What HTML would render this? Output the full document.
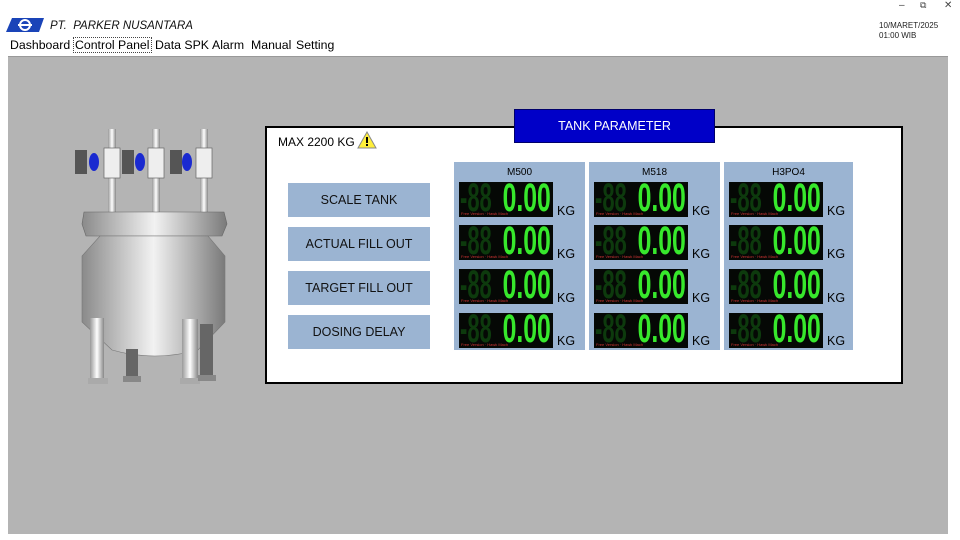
<!DOCTYPE html>
<html><head><meta charset="utf-8"><style>
*{margin:0;padding:0;box-sizing:border-box}
body{width:960px;height:540px;background:#fff;position:relative;overflow:hidden;font-family:"Liberation Sans",sans-serif}
.a{position:absolute}
.tab{position:absolute;top:38px;font-size:12.3px;color:#000}
.gray{left:8px;top:56px;width:940px;height:478px;background:#b4b4b4;border-top:1px solid #999}
.panel{left:265px;top:126px;width:638px;height:258px;background:#fff;border:2px solid #000}
.title{left:514px;top:109px;width:201px;height:34px;background:#0000c8;color:#fff;font-size:12.5px;text-align:center;line-height:32px;border:1px solid #00006a}
.btn{position:absolute;left:288px;width:142px;height:34px;background:#9bb4d2;font-size:12.5px;text-align:center;line-height:34px;color:#111}
.col{position:absolute;top:162px;width:131px;height:188px;background:#9bb4d2}
.col .h{position:absolute;top:5px;width:100%;text-align:center;font-size:10px}
.disp{position:absolute;left:5px;width:94px;height:35px;background:#050805;overflow:hidden}
.disp .d{position:absolute;left:1px;top:-6px;font-size:40px;font-weight:bold;color:#0d3a0d;transform:scaleX(0.55);transform-origin:left top;font-family:"Liberation Sans Narrow","Liberation Sans",sans-serif}
.disp .b{position:absolute;right:2px;top:-6px;font-size:40px;font-weight:bold;color:#37e82c;transform:scaleX(0.62);transform-origin:right top;font-family:"Liberation Sans Narrow","Liberation Sans",sans-serif}
.disp .f{position:absolute;left:2px;bottom:1px;font-size:4px;color:#c33}
.kg{position:absolute;left:103px;font-size:12.5px}
</style></head><body>
<svg class="a" style="left:6px;top:17px" width="40" height="16" viewBox="0 0 40 16"><path d="M6 1 H38 L33 15 H0 Z" fill="#1a44b8"/><circle cx="19" cy="8" r="5" fill="none" stroke="#fff" stroke-width="2"/><path d="M12 8 H26" stroke="#fff" stroke-width="2"/></svg>
<div class="a" style="left:50px;top:20px;font-size:11.5px;font-style:italic;color:#111">PT.&nbsp; PARKER NUSANTARA</div>
<div class="tab" style="left:10px">Dashboard</div>
<div class="tab" style="left:73px;top:37px;border:1px dotted #444;padding:0 1px">Control Panel</div>
<div class="tab" style="left:155px">Data SPK</div>
<div class="tab" style="left:212px">Alarm</div>
<div class="tab" style="left:251px">Manual</div>
<div class="tab" style="left:296px">Setting</div>
<div class="a" style="left:899px;top:0px;font-size:10px;color:#444">–</div>
<div class="a" style="left:920px;top:0px;font-size:9px;color:#444">⧉</div>
<div class="a" style="left:944px;top:0px;font-size:10px;color:#444">✕</div>
<div class="a" style="left:879px;top:21px;font-size:8px;color:#222;line-height:10px">10/MARET/2025<br>01:00 WIB</div>
<div class="a gray"></div>
<svg class="a" style="left:70px;top:124px" width="160" height="262" viewBox="0 0 160 262">
<defs><linearGradient id="g" x1="0" x2="1"><stop offset="0" stop-color="#8a8a8a"/><stop offset=".5" stop-color="#f2f2f2"/><stop offset="1" stop-color="#7a7a7a"/></linearGradient>
<linearGradient id="p" x1="0" x2="1"><stop offset="0" stop-color="#999"/><stop offset=".5" stop-color="#fff"/><stop offset="1" stop-color="#888"/></linearGradient></defs>
<rect x="38" y="5" width="8" height="88" fill="url(#p)"/><rect x="82" y="5" width="8" height="88" fill="url(#p)"/><rect x="130" y="5" width="8" height="88" fill="url(#p)"/>
<g fill="#eee" stroke="#666" stroke-width=".7"><rect x="34" y="24" width="16" height="30"/><rect x="78" y="24" width="16" height="30"/><rect x="126" y="24" width="16" height="30"/></g>
<g><rect x="5" y="26" width="12" height="24" fill="#555"/><ellipse cx="24" cy="38" rx="5" ry="9" fill="#1a2ad0"/><rect x="52" y="26" width="12" height="24" fill="#555"/><ellipse cx="70" cy="38" rx="5" ry="9" fill="#1a2ad0"/><rect x="100" y="26" width="12" height="24" fill="#555"/><ellipse cx="117" cy="38" rx="5" ry="9" fill="#1a2ad0"/></g>
<path d="M14 88 H154 L157 100 L152 112 H16 L12 100 Z" fill="url(#g)" stroke="#666" stroke-width=".6"/>
<path d="M30 112 H138 L155 132 V198 L128 226 Q85 238 42 226 L12 198 V132 Z" fill="url(#g)" stroke="#777" stroke-width=".6"/>
<rect x="20" y="194" width="14" height="60" fill="url(#p)"/><rect x="18" y="254" width="20" height="6" fill="#aaa"/>
<rect x="112" y="195" width="16" height="60" fill="url(#p)"/><rect x="110" y="254" width="20" height="6" fill="#aaa"/>
<rect x="56" y="225" width="12" height="28" fill="#666"/><rect x="53" y="252" width="18" height="6" fill="#888"/>
<rect x="130" y="200" width="13" height="52" fill="#666"/><rect x="128" y="251" width="18" height="6" fill="#888"/>
</svg>
<div class="a panel"></div>
<div class="a title">TANK PARAMETER</div>
<div class="a" style="left:278px;top:135px;font-size:12px">MAX 2200 KG</div>
<svg class="a" style="left:357px;top:131px" width="20" height="18" viewBox="0 0 20 18"><path d="M10 1 L19 17 H1 Z" fill="#ffef3a" stroke="#888" stroke-width="1"/><rect x="9" y="6" width="2" height="6" fill="#000"/><rect x="9" y="13" width="2" height="2" fill="#000"/></svg>
<div class="btn" style="top:183px">SCALE TANK</div>
<div class="btn" style="top:227px">ACTUAL FILL OUT</div>
<div class="btn" style="top:271px">TARGET FILL OUT</div>
<div class="btn" style="top:315px">DOSING DELAY</div>
<div class="col" style="left:454px"><div class="h">M500</div>
<div class="disp" style="top:20px"><span class="d">-88</span><span class="b">0.00</span><span class="f">Free Version · Hawk Mach</span></div><div class="kg" style="top:42px">KG</div>
<div class="disp" style="top:63px"><span class="d">-88</span><span class="b">0.00</span><span class="f">Free Version · Hawk Mach</span></div><div class="kg" style="top:85px">KG</div>
<div class="disp" style="top:107px"><span class="d">-88</span><span class="b">0.00</span><span class="f">Free Version · Hawk Mach</span></div><div class="kg" style="top:129px">KG</div>
<div class="disp" style="top:151px"><span class="d">-88</span><span class="b">0.00</span><span class="f">Free Version · Hawk Mach</span></div><div class="kg" style="top:172px">KG</div></div>
<div class="col" style="left:589px"><div class="h">M518</div>
<div class="disp" style="top:20px"><span class="d">-88</span><span class="b">0.00</span><span class="f">Free Version · Hawk Mach</span></div><div class="kg" style="top:42px">KG</div>
<div class="disp" style="top:63px"><span class="d">-88</span><span class="b">0.00</span><span class="f">Free Version · Hawk Mach</span></div><div class="kg" style="top:85px">KG</div>
<div class="disp" style="top:107px"><span class="d">-88</span><span class="b">0.00</span><span class="f">Free Version · Hawk Mach</span></div><div class="kg" style="top:129px">KG</div>
<div class="disp" style="top:151px"><span class="d">-88</span><span class="b">0.00</span><span class="f">Free Version · Hawk Mach</span></div><div class="kg" style="top:172px">KG</div></div>
<div class="col" style="left:724px;width:129px"><div class="h">H3PO4</div>
<div class="disp" style="top:20px"><span class="d">-88</span><span class="b">0.00</span><span class="f">Free Version · Hawk Mach</span></div><div class="kg" style="top:42px">KG</div>
<div class="disp" style="top:63px"><span class="d">-88</span><span class="b">0.00</span><span class="f">Free Version · Hawk Mach</span></div><div class="kg" style="top:85px">KG</div>
<div class="disp" style="top:107px"><span class="d">-88</span><span class="b">0.00</span><span class="f">Free Version · Hawk Mach</span></div><div class="kg" style="top:129px">KG</div>
<div class="disp" style="top:151px"><span class="d">-88</span><span class="b">0.00</span><span class="f">Free Version · Hawk Mach</span></div><div class="kg" style="top:172px">KG</div></div>
</body></html>
